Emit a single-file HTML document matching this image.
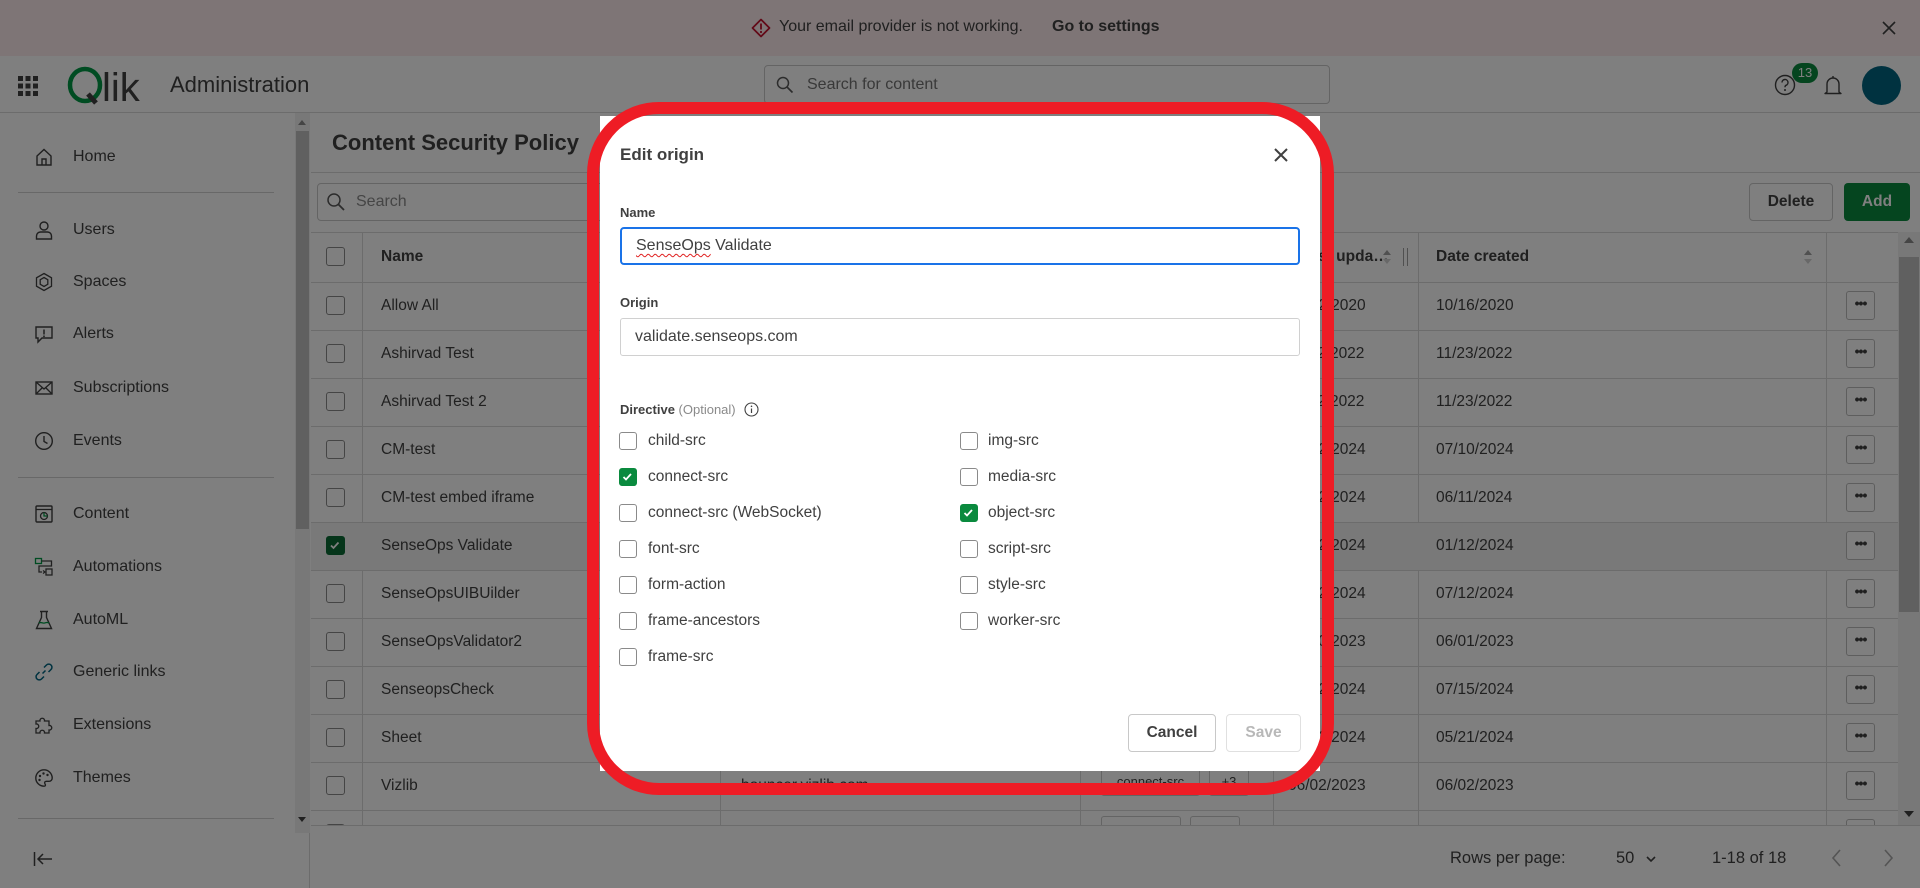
<!DOCTYPE html>
<html><head><meta charset="utf-8">
<style>
*{box-sizing:border-box;margin:0;padding:0}
body{width:1920px;height:888px;overflow:hidden;position:relative;background:#fff;font-family:"Liberation Sans",sans-serif;color:#404040}
.a{position:absolute}
.banner{left:0;top:0;width:1920px;height:56px;background:#fcebed}
.hdr{left:0;top:56px;width:1920px;height:57px;background:#fff;border-bottom:1px solid #d9d9d9}
.side{left:0;top:113px;width:310px;height:775px;border-right:1px solid #d9d9d9}
.nav{left:34px;font-size:16px;color:#404040;display:flex;align-items:center;gap:0}
.nav svg{width:20px;height:20px;margin-right:19px}
.div{left:18px;width:256px;height:1px;background:#d0d0d0}
.cell{position:absolute;font-size:15.5px;color:#404040;white-space:nowrap}
.cb{position:absolute;width:19px;height:19px;border:1.5px solid #8a8a8a;border-radius:3px;background:#fff}
.hl{position:absolute;height:1px;background:#d9d9d9}
.vl{position:absolute;width:1px;background:#d9d9d9}
.dots{position:absolute;width:29px;height:29px;border:1px solid #bcbcbc;border-radius:3px;text-align:center;font-size:14px;line-height:22px;font-weight:bold;color:#404040;letter-spacing:-1px;background:#fff}
.ov{left:0;top:0;width:1920px;height:888px;background:rgba(0,0,0,.5)}
.dlg{left:600px;top:116px;width:720px;height:655px;background:#fff}
.lbl{position:absolute;font-size:13px;font-weight:bold;color:#404040}
.inp{position:absolute;left:620px;width:680px;border:1px solid #d0d0d0;border-radius:3px;font-size:16px;padding-left:14px;color:#404040;display:flex;align-items:center}
.dcb{position:absolute;width:18px;height:18px;border:1.5px solid #8a8a8a;border-radius:3px;background:#fff}
.dcb.on{background:#0a8a3e;border-color:#0a8a3e}
.dlb{position:absolute;font-size:15.5px;color:#404040}
#rows{position:absolute;left:0;top:0;width:1920px;height:825px;overflow:hidden}
</style></head><body>

<div class="a banner"></div>
<svg class="a" style="left:751px;top:18px" width="20" height="20" viewBox="0 0 20 20"><path d="M10 1.5 L18.5 10 L10 18.5 L1.5 10 Z" fill="none" stroke="#c4122f" stroke-width="1.7" stroke-linejoin="round"/><path d="M10 5.5v6" stroke="#c4122f" stroke-width="1.8"/><circle cx="10" cy="14" r="1.1" fill="#c4122f"/></svg>
<div class="a" style="left:779px;top:18px;font-size:16px;color:#404040">Your email provider is not working.</div>
<div class="a" style="left:1052px;top:18px;font-size:16px;font-weight:bold;color:#404040">Go to settings</div>
<svg class="a" style="left:1881px;top:20px" width="16" height="16" viewBox="0 0 16 16"><path d="M2 2L14 14M14 2L2 14" stroke="#404040" stroke-width="1.6"/></svg>

<div class="a hdr"></div>
<svg class="a" style="left:18px;top:76px" width="20" height="20" viewBox="0 0 20 20" fill="#404040"><rect x="0" y="0" width="5" height="5"/><rect x="7.5" y="0" width="5" height="5"/><rect x="15" y="0" width="5" height="5"/><rect x="0" y="7.5" width="5" height="5"/><rect x="7.5" y="7.5" width="5" height="5"/><rect x="15" y="7.5" width="5" height="5"/><rect x="0" y="15" width="5" height="5"/><rect x="7.5" y="15" width="5" height="5"/><rect x="15" y="15" width="5" height="5"/></svg>
<svg class="a" style="left:66px;top:64px" width="86" height="42" viewBox="0 0 86 42"><ellipse cx="19" cy="21" rx="15" ry="16" fill="none" stroke="#009845" stroke-width="4.5"/><path d="M22 30 L30 39" stroke="#404040" stroke-width="5"/><text x="36" y="37" font-family="Liberation Sans" font-size="40" fill="#404040">lik</text></svg>
<div class="a" style="left:170px;top:72px;font-size:22px;color:#404040">Administration</div>
<div class="a" style="left:764px;top:65px;width:566px;height:39px;border:1px solid #c8c8c8;border-radius:4px"></div>
<svg class="a" style="left:776px;top:76px" width="18" height="18" viewBox="0 0 18 18"><circle cx="7" cy="7" r="5.5" fill="none" stroke="#595959" stroke-width="1.5"/><path d="M11 11L16.5 16.5" stroke="#595959" stroke-width="1.7"/></svg>
<div class="a" style="left:807px;top:76px;font-size:16px;color:#737373">Search for content</div>
<svg class="a" style="left:1774px;top:74px" width="22" height="22" viewBox="0 0 22 22"><circle cx="11" cy="11" r="9.5" fill="none" stroke="#404040" stroke-width="1.4"/><path d="M8 8.5a3 3 0 1 1 4 2.8c-.8.4-1 1-1 2" fill="none" stroke="#404040" stroke-width="1.4"/><circle cx="11" cy="16" r="1" fill="#404040"/></svg>
<div class="a" style="left:1792px;top:63px;width:26px;height:20px;border-radius:10px;background:#0a8a3e;color:#fff;font-size:13px;text-align:center;line-height:20px">13</div>
<svg class="a" style="left:1824px;top:74px" width="18" height="24" viewBox="0 0 18 24"><path d="M3 18V10a6 6 0 0 1 12 0v8l2 1.5H1z" fill="none" stroke="#404040" stroke-width="1.4" stroke-linejoin="round"/><path d="M9 2v2" stroke="#404040" stroke-width="1.4"/></svg>
<div class="a" style="left:1862px;top:66px;width:39px;height:39px;border-radius:50%;background:#006580"></div>

<div class="a side"></div>
<div class="a" style="left:295px;top:113px;width:15px;height:720px;background:#f0f0f0"></div>
<div class="a" style="left:296px;top:131px;width:13px;height:398px;background:#c0c0c0"></div>
<svg class="a" style="left:297px;top:118px" width="10" height="8"><path d="M1 7L5 2L9 7Z" fill="#8a8a8a"/></svg>
<svg class="a" style="left:297px;top:816px" width="10" height="8"><path d="M1 1L5 6L9 1Z" fill="#404040"/></svg>

<div class="a nav" style="top:147px"><svg viewBox="0 0 20 20"><path d="M3 9L10 2.5L17 9V18H3Z M8 18v-6h4v6" fill="none" stroke="#404040" stroke-width="1.4"/></svg>Home</div>
<div class="a div" style="top:192px"></div>
<div class="a nav" style="top:220px"><svg viewBox="0 0 20 20"><circle cx="10" cy="6" r="4" fill="none" stroke="#404040" stroke-width="1.4"/><path d="M2.5 19v-3a4 4 0 0 1 4-4h7a4 4 0 0 1 4 4v3z" fill="none" stroke="#404040" stroke-width="1.4"/></svg>Users</div>
<div class="a nav" style="top:272px"><svg viewBox="0 0 20 20"><path d="M10 1.5L17.5 5.8V14.2L10 18.5L2.5 14.2V5.8Z M10 5.5L13.8 7.7V12.3L10 14.5L6.2 12.3V7.7Z" fill="none" stroke="#404040" stroke-width="1.3"/></svg>Spaces</div>
<div class="a nav" style="top:324px"><svg viewBox="0 0 20 20"><path d="M2 3h16v11H8l-4 4v-4H2z" fill="none" stroke="#404040" stroke-width="1.4"/><path d="M10 5.5v5" stroke="#404040" stroke-width="1.5"/><circle cx="10" cy="12.3" r=".9" fill="#404040"/></svg>Alerts</div>
<div class="a nav" style="top:378px"><svg viewBox="0 0 20 20"><rect x="2" y="4" width="16" height="12" fill="none" stroke="#404040" stroke-width="1.4"/><path d="M2 4l8 7 8-7M2 16l6-6M18 16l-6-6" fill="none" stroke="#404040" stroke-width="1.3"/></svg>Subscriptions</div>
<div class="a nav" style="top:431px"><svg viewBox="0 0 20 20"><circle cx="10" cy="10" r="8.3" fill="none" stroke="#404040" stroke-width="1.4"/><path d="M10 5v5.5l3.5 2" fill="none" stroke="#404040" stroke-width="1.4"/></svg>Events</div>
<div class="a div" style="top:477px"></div>
<div class="a nav" style="top:504px"><svg viewBox="0 0 20 20"><rect x="2" y="2" width="16" height="16" rx="1" fill="none" stroke="#404040" stroke-width="1.4"/><path d="M2 5.5h16" stroke="#404040" stroke-width="1.3"/><circle cx="10" cy="12" r="3.5" fill="none" stroke="#404040" stroke-width="1.3"/><path d="M10 8.5v3.5h3.5" fill="none" stroke="#009845" stroke-width="1.3"/></svg>Content</div>
<div class="a nav" style="top:557px"><svg viewBox="0 0 20 20"><rect x="1.5" y="1.5" width="6" height="5" fill="none" stroke="#009845" stroke-width="1.3"/><path d="M7.5 4h10v5H5v6h3" fill="none" stroke="#404040" stroke-width="1.3"/><rect x="12" y="12" width="6" height="6" fill="none" stroke="#404040" stroke-width="1.3"/><path d="M9 13.5l2 1.5-2 1.5" fill="none" stroke="#404040" stroke-width="1.2"/></svg>Automations</div>
<div class="a nav" style="top:610px"><svg viewBox="0 0 20 20"><path d="M6 1.5h8M7.5 1.5v6L2.5 18.5h15L12.5 7.5v-6" fill="none" stroke="#404040" stroke-width="1.4"/><path d="M4.8 13c2-1.5 4 1 6.5-.2 1.4-.6 2.5-.4 3.8.2" fill="none" stroke="#009845" stroke-width="1.3"/></svg>AutoML</div>
<div class="a nav" style="top:662px"><svg viewBox="0 0 20 20"><path d="M8.5 11.5l3-3M10 5.5l2.5-2.5a3 3 0 0 1 4.5 4.5L14.5 10M10 14.5L7.5 17a3 3 0 0 1-4.5-4.5L5.5 10" fill="none" stroke="#006580" stroke-width="1.5"/></svg>Generic links</div>
<div class="a nav" style="top:715px"><svg viewBox="0 0 20 20"><path d="M2 6h4a2.3 2.3 0 1 1 4.5 0H15v4.5a2.3 2.3 0 1 1 0 4.5V18h-4.5a2.3 2.3 0 1 0-4.5 0H2v-4.5a2.3 2.3 0 1 0 0-4.5z" fill="none" stroke="#404040" stroke-width="1.3"/></svg>Extensions</div>
<div class="a nav" style="top:768px"><svg viewBox="0 0 20 20"><path d="M10 1.8a8.2 8.2 0 0 0 0 16.4c1.6 0 1.8-1.3 1-2.3-.9-1.1-.2-2.6 1.2-2.6H15a3.2 3.2 0 0 0 3.2-3.3c0-4.5-3.7-8.2-8.2-8.2z" fill="none" stroke="#404040" stroke-width="1.4"/><circle cx="6" cy="8" r="1.2" fill="#404040"/><circle cx="9.5" cy="5.5" r="1.2" fill="#404040"/><circle cx="13.5" cy="7" r="1.2" fill="#404040"/><circle cx="5.5" cy="12" r="1.2" fill="#404040"/></svg>Themes</div>
<div class="a div" style="top:818px"></div>
<svg class="a" style="left:33px;top:851px" width="20" height="16" viewBox="0 0 20 16"><path d="M1.5 1v14M19 8H5M10 3L5 8l5 5" fill="none" stroke="#404040" stroke-width="1.5"/></svg>

<div class="a" style="left:332px;top:130px;font-size:22px;font-weight:bold;color:#404040">Content Security Policy</div>
<div class="hl" style="left:311px;top:172px;width:1609px"></div>
<div class="a" style="left:317px;top:183px;width:400px;height:38px;border:1px solid #c8c8c8;border-radius:4px"></div>
<svg class="a" style="left:326px;top:192px" width="20" height="20" viewBox="0 0 20 20"><circle cx="8" cy="8" r="6" fill="none" stroke="#595959" stroke-width="1.5"/><path d="M12.5 12.5L18 18" stroke="#595959" stroke-width="1.8"/></svg>
<div class="a" style="left:356px;top:193px;font-size:16px;color:#8a8a8a">Search</div>
<div class="a" style="left:1749px;top:183px;width:84px;height:38px;border:1px solid #c8c8c8;border-radius:4px;font-size:15.5px;font-weight:bold;text-align:center;line-height:36px;color:#404040">Delete</div>
<div class="a" style="left:1844px;top:183px;width:66px;height:38px;border-radius:4px;background:#0a8a3e;font-size:15.5px;font-weight:bold;text-align:center;line-height:38px;color:#fff">Add</div>

<div class="hl" style="left:311px;top:232px;width:1587px"></div>
<div class="hl" style="left:311px;top:282px;width:1587px"></div>
<div class="vl" style="left:362px;top:232px;height:593px"></div>
<div class="vl" style="left:720px;top:232px;height:593px"></div>
<div class="vl" style="left:1080px;top:232px;height:593px"></div>
<div class="vl" style="left:1273px;top:232px;height:593px"></div>
<div class="vl" style="left:1418px;top:232px;height:593px"></div>
<div class="vl" style="left:1826px;top:232px;height:593px"></div>
<div class="hl" style="left:311px;top:825px;width:1609px"></div>
<div class="cb" style="left:326px;top:247px"></div>
<div class="cell" style="left:381px;top:248px;font-weight:bold">Name</div>
<div class="cell" style="left:1300px;top:248px;font-weight:bold">Last upda…</div>
<svg class="a" style="left:1382px;top:248px" width="10" height="18"><path d="M1 7L5 2L9 7Z" fill="#a0a0a0"/><path d="M1 11L5 16L9 11Z" fill="#d0d0d0"/></svg>
<div class="a" style="left:1403px;top:248px;width:1px;height:18px;background:#a0a0a0"></div>
<div class="a" style="left:1407px;top:248px;width:1px;height:18px;background:#a0a0a0"></div>
<div class="cell" style="left:1436px;top:248px;font-weight:bold">Date created</div>
<svg class="a" style="left:1803px;top:248px" width="10" height="18"><path d="M1 7L5 2L9 7Z" fill="#a0a0a0"/><path d="M1 11L5 16L9 11Z" fill="#d0d0d0"/></svg>

<div class="a" style="left:311px;top:522px;width:1587px;height:48px;background:#f2f2f2"></div>

<div id="rows"></div>
<script>
var names=["Allow All","Ashirvad Test","Ashirvad Test 2","CM-test","CM-test embed iframe","SenseOps Validate","SenseOpsUIBUilder","SenseOpsValidator2","SenseopsCheck","Sheet","Vizlib",""];
var cr=["10/16/2020","11/23/2022","11/23/2022","07/10/2024","06/11/2024","01/12/2024","07/12/2024","06/01/2023","07/15/2024","05/21/2024","06/02/2023",""];
var up=["10/22/2020","11/22/2022","11/22/2022","07/12/2024","07/12/2024","07/12/2024","07/12/2024","06/20/2023","07/12/2024","07/12/2024","06/02/2023",""];
var h="";
for(var i=0;i<12;i++){var t=282+48*i;
 h+='<div class="hl" style="left:311px;top:'+(t+48)+'px;width:1587px"></div>';
 if(i==5){h+='<div class="cb" style="left:326px;top:'+(t+14)+'px;background:#0a6b35;border-color:#0a6b35"><svg width="16" height="16" viewBox="0 0 16 16" style="position:absolute;left:0;top:0"><path d="M4 8.5l2.5 2.5 5-5.5" fill="none" stroke="#fff" stroke-width="1.8"/></svg></div>';}
 else h+='<div class="cb" style="left:326px;top:'+(t+14)+'px"></div>';
 h+='<div class="cell" style="left:381px;top:'+(t+15)+'px">'+names[i]+'</div>';
 h+='<div class="cell" style="left:1288px;top:'+(t+15)+'px">'+up[i]+'</div>';
 h+='<div class="cell" style="left:1436px;top:'+(t+15)+'px">'+cr[i]+'</div>';
 h+='<div class="dots" style="left:1846px;top:'+(t+9)+'px">•••</div>';
}
h+='<div class="cell" style="left:741px;top:777px">bouncer.vizlib.com</div>';
h+='<div class="a" style="left:1101px;top:768px;width:99px;height:28px;border:1px solid #c8c8c8;border-radius:3px;font-size:13px;text-align:center;line-height:26px">connect-src</div>';
h+='<div class="a" style="left:1209px;top:768px;width:40px;height:28px;border:1px solid #c8c8c8;border-radius:3px;font-size:13px;text-align:center;line-height:26px">+3</div>';
h+='<div class="a" style="left:1101px;top:816px;width:80px;height:12px;border:1px solid #c8c8c8;border-radius:3px"></div>';
h+='<div class="a" style="left:1190px;top:816px;width:50px;height:12px;border:1px solid #c8c8c8;border-radius:3px"></div>';
document.getElementById("rows").innerHTML=h;
</script>
<div class="a" style="left:1898px;top:232px;width:22px;height:593px;background:#f0f0f0"></div>
<div class="a" style="left:1899px;top:257px;width:20px;height:355px;background:#c0c0c0"></div>
<svg class="a" style="left:1903px;top:236px" width="12" height="8"><path d="M1 7L6 1L11 7Z" fill="#8a8a8a"/></svg>
<svg class="a" style="left:1903px;top:810px" width="12" height="8"><path d="M1 1L6 7L11 1Z" fill="#404040"/></svg>

<div class="cell" style="left:1450px;top:849px;font-size:16.5px">Rows per page:</div>
<div class="cell" style="left:1616px;top:849px;font-size:16.5px">50</div>
<svg class="a" style="left:1645px;top:854px" width="12" height="10"><path d="M2 3l4 4 4-4" fill="none" stroke="#404040" stroke-width="1.6"/></svg>
<div class="cell" style="left:1712px;top:849px;font-size:16.5px">1-18 of 18</div>
<svg class="a" style="left:1830px;top:848px" width="12" height="20"><path d="M10 2L3 10l7 8" fill="none" stroke="#a8a8a8" stroke-width="1.6"/></svg>
<svg class="a" style="left:1883px;top:848px" width="12" height="20"><path d="M2 2l7 8-7 8" fill="none" stroke="#a8a8a8" stroke-width="1.6"/></svg>

<div class="a ov"></div>

<div class="a dlg"></div>
<div class="a" style="left:620px;top:145px;font-size:17px;font-weight:bold;color:#404040">Edit origin</div>
<svg class="a" style="left:1273px;top:147px" width="16" height="16" viewBox="0 0 16 16"><path d="M2 2L14 14M14 2L2 14" stroke="#404040" stroke-width="2"/></svg>
<div class="lbl" style="left:620px;top:205px">Name</div>
<div class="inp" style="top:227px;height:38px;border:2px solid #1a73e8;border-radius:4px"><span style="text-decoration:underline wavy #e02020;text-decoration-thickness:1px;text-underline-offset:3px">SenseOps</span>&nbsp;Validate</div>
<div class="lbl" style="left:620px;top:295px">Origin</div>
<div class="inp" style="top:318px;height:38px">validate.senseops.com</div>
<div class="lbl" style="left:620px;top:402px">Directive <span style="font-weight:normal;color:#8a8a8a">(Optional)</span></div>
<svg class="a" style="left:744px;top:402px" width="15" height="15" viewBox="0 0 15 15"><circle cx="7.5" cy="7.5" r="6.5" fill="none" stroke="#404040" stroke-width="1.1"/><path d="M7.5 6.5v4.5" stroke="#404040" stroke-width="1.2"/><circle cx="7.5" cy="4.3" r=".8" fill="#404040"/></svg>

<div class="dcb" style="left:619px;top:432px"></div><div class="dlb" style="left:648px;top:432px">child-src</div>
<div class="dcb on" style="left:619px;top:468px"><svg width="15" height="15" viewBox="0 0 15 15" style="position:absolute;left:0;top:0"><path d="M3.5 8l2.5 2.5 5-5.5" fill="none" stroke="#fff" stroke-width="1.8"/></svg></div><div class="dlb" style="left:648px;top:468px">connect-src</div>
<div class="dcb" style="left:619px;top:504px"></div><div class="dlb" style="left:648px;top:504px">connect-src (WebSocket)</div>
<div class="dcb" style="left:619px;top:540px"></div><div class="dlb" style="left:648px;top:540px">font-src</div>
<div class="dcb" style="left:619px;top:576px"></div><div class="dlb" style="left:648px;top:576px">form-action</div>
<div class="dcb" style="left:619px;top:612px"></div><div class="dlb" style="left:648px;top:612px">frame-ancestors</div>
<div class="dcb" style="left:619px;top:648px"></div><div class="dlb" style="left:648px;top:648px">frame-src</div>

<div class="dcb" style="left:960px;top:432px"></div><div class="dlb" style="left:988px;top:432px">img-src</div>
<div class="dcb" style="left:960px;top:468px"></div><div class="dlb" style="left:988px;top:468px">media-src</div>
<div class="dcb on" style="left:960px;top:504px"><svg width="15" height="15" viewBox="0 0 15 15" style="position:absolute;left:0;top:0"><path d="M3.5 8l2.5 2.5 5-5.5" fill="none" stroke="#fff" stroke-width="1.8"/></svg></div><div class="dlb" style="left:988px;top:504px">object-src</div>
<div class="dcb" style="left:960px;top:540px"></div><div class="dlb" style="left:988px;top:540px">script-src</div>
<div class="dcb" style="left:960px;top:576px"></div><div class="dlb" style="left:988px;top:576px">style-src</div>
<div class="dcb" style="left:960px;top:612px"></div><div class="dlb" style="left:988px;top:612px">worker-src</div>

<div class="a" style="left:1128px;top:714px;width:88px;height:38px;border:1px solid #c8c8c8;border-radius:4px;font-size:15.5px;font-weight:bold;text-align:center;line-height:36px;color:#404040">Cancel</div>
<div class="a" style="left:1226px;top:714px;width:75px;height:38px;border:1px solid #e0e0e0;border-radius:4px;font-size:15.5px;font-weight:bold;text-align:center;line-height:36px;color:#b8b8b8">Save</div>

<div class="a" style="left:587px;top:102px;width:747px;height:693px;border:12px solid #ee1c25;border-radius:72px"></div>
</body></html>
